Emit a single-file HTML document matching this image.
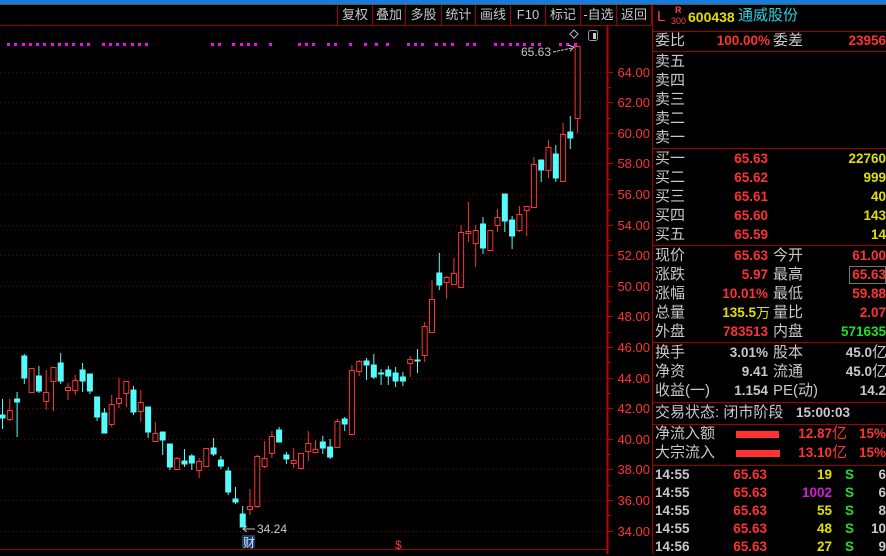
<!DOCTYPE html>
<html><head><meta charset="utf-8"><style>
*{margin:0;padding:0;box-sizing:border-box}
body{width:886px;height:554px;background:#000;overflow:hidden;position:relative;font-family:"Liberation Sans","Noto Sans CJK SC",sans-serif;}
.a{position:absolute;white-space:nowrap;line-height:18px;}
.l{color:#c8c8c8;font-size:15px;}
.n{font-weight:bold;font-size:13.5px;text-align:right;}
.r{color:#ff3232}.y{color:#e0e000}.g{color:#20e020}.w{color:#c8c8c8}.m{color:#d020d0}
.hl{position:absolute;left:652px;width:234px;height:1px;background:#a00000}
.tb{position:absolute;top:5px;height:20px;color:#c8c8c8;font-size:13px;line-height:20px;text-align:center;border-right:1px solid #a00000}
</style></head><body>
<div style="position:absolute;left:0;top:0;width:886px;height:4px;background:#1a7ad8"></div>
<div style="position:absolute;left:0;top:4px;width:886px;height:1px;background:#555"></div>
<div style="position:absolute;left:0;top:25px;width:652px;height:1px;background:#a00000"></div>
<div style="position:absolute;left:337px;top:5px;width:1px;height:20px;background:#a00000"></div>
<div class="tb" style="left:338px;width:35px">复权</div>
<div class="tb" style="left:373px;width:33px">叠加</div>
<div class="tb" style="left:406px;width:36px">多股</div>
<div class="tb" style="left:442px;width:34px">统计</div>
<div class="tb" style="left:476px;width:35px">画线</div>
<div class="tb" style="left:511px;width:35px">F10</div>
<div class="tb" style="left:546px;width:35px">标记</div>
<div class="tb" style="left:581px;width:36px">-自选</div>
<div class="tb" style="left:617px;width:35px">返回</div>
<div style="position:absolute;left:652px;top:5px;width:1px;height:549px;background:#a00000"></div>

<svg style="position:absolute;left:0;top:0" width="652" height="554">
<g stroke="#800000" stroke-dasharray="1,3" stroke-width="1">
<line x1="0" x2="605" y1="72.5" y2="72.5"/><line x1="0" x2="605" y1="102.5" y2="102.5"/><line x1="0" x2="605" y1="133.5" y2="133.5"/><line x1="0" x2="605" y1="163.5" y2="163.5"/><line x1="0" x2="605" y1="194.5" y2="194.5"/><line x1="0" x2="605" y1="225.5" y2="225.5"/><line x1="0" x2="605" y1="255.5" y2="255.5"/><line x1="0" x2="605" y1="286.5" y2="286.5"/><line x1="0" x2="605" y1="316.5" y2="316.5"/><line x1="0" x2="605" y1="347.5" y2="347.5"/><line x1="0" x2="605" y1="378.5" y2="378.5"/><line x1="0" x2="605" y1="408.5" y2="408.5"/><line x1="0" x2="605" y1="439.5" y2="439.5"/><line x1="0" x2="605" y1="469.5" y2="469.5"/><line x1="0" x2="605" y1="500.5" y2="500.5"/><line x1="0" x2="605" y1="531.5" y2="531.5"/>
</g>
<line x1="0" x2="607" y1="549.5" y2="549.5" stroke="#a00000"/>
<line x1="607.5" x2="607.5" y1="26" y2="554" stroke="#c00000" stroke-width="2"/>
<g stroke="#c00000">
<line x1="607" x2="613" y1="72.5" y2="72.5"/><line x1="607" x2="611" y1="87.5" y2="87.5"/><line x1="607" x2="613" y1="102.5" y2="102.5"/><line x1="607" x2="611" y1="118.5" y2="118.5"/><line x1="607" x2="613" y1="133.5" y2="133.5"/><line x1="607" x2="611" y1="148.5" y2="148.5"/><line x1="607" x2="613" y1="163.5" y2="163.5"/><line x1="607" x2="611" y1="179.5" y2="179.5"/><line x1="607" x2="613" y1="194.5" y2="194.5"/><line x1="607" x2="611" y1="210.5" y2="210.5"/><line x1="607" x2="613" y1="225.5" y2="225.5"/><line x1="607" x2="611" y1="240.5" y2="240.5"/><line x1="607" x2="613" y1="255.5" y2="255.5"/><line x1="607" x2="611" y1="271.5" y2="271.5"/><line x1="607" x2="613" y1="286.5" y2="286.5"/><line x1="607" x2="611" y1="301.5" y2="301.5"/><line x1="607" x2="613" y1="316.5" y2="316.5"/><line x1="607" x2="611" y1="332.5" y2="332.5"/><line x1="607" x2="613" y1="347.5" y2="347.5"/><line x1="607" x2="611" y1="362.5" y2="362.5"/><line x1="607" x2="613" y1="378.5" y2="378.5"/><line x1="607" x2="611" y1="393.5" y2="393.5"/><line x1="607" x2="613" y1="408.5" y2="408.5"/><line x1="607" x2="611" y1="424.5" y2="424.5"/><line x1="607" x2="613" y1="439.5" y2="439.5"/><line x1="607" x2="611" y1="454.5" y2="454.5"/><line x1="607" x2="613" y1="469.5" y2="469.5"/><line x1="607" x2="611" y1="485.5" y2="485.5"/><line x1="607" x2="613" y1="500.5" y2="500.5"/><line x1="607" x2="611" y1="515.5" y2="515.5"/><line x1="607" x2="613" y1="531.5" y2="531.5"/>
</g>
<g fill="#ff3232" font-family="Liberation Sans, sans-serif" font-size="13" text-anchor="end">
<text x="650" y="77">64.00</text><text x="650" y="107">62.00</text><text x="650" y="138">60.00</text><text x="650" y="168">58.00</text><text x="650" y="199">56.00</text><text x="650" y="230">54.00</text><text x="650" y="260">52.00</text><text x="650" y="291">50.00</text><text x="650" y="321">48.00</text><text x="650" y="352">46.00</text><text x="650" y="383">44.00</text><text x="650" y="413">42.00</text><text x="650" y="444">40.00</text><text x="650" y="474">38.00</text><text x="650" y="505">36.00</text><text x="650" y="536">34.00</text>
</g>
<g fill="#ff00ff">
<rect x="7" y="43" width="3" height="3"/><rect x="14" y="43" width="3" height="3"/><rect x="22" y="43" width="3" height="3"/><rect x="29" y="43" width="3" height="3"/><rect x="36" y="43" width="3" height="3"/><rect x="43" y="43" width="3" height="3"/><rect x="51" y="43" width="3" height="3"/><rect x="58" y="43" width="3" height="3"/><rect x="65" y="43" width="3" height="3"/><rect x="72" y="43" width="3" height="3"/><rect x="80" y="43" width="3" height="3"/><rect x="87" y="43" width="3" height="3"/><rect x="102" y="43" width="3" height="3"/><rect x="109" y="43" width="3" height="3"/><rect x="116" y="43" width="3" height="3"/><rect x="123" y="43" width="3" height="3"/><rect x="131" y="43" width="3" height="3"/><rect x="138" y="43" width="3" height="3"/><rect x="145" y="43" width="3" height="3"/><rect x="211" y="43" width="3" height="3"/><rect x="218" y="43" width="3" height="3"/><rect x="232" y="43" width="3" height="3"/><rect x="240" y="43" width="3" height="3"/><rect x="247" y="43" width="3" height="3"/><rect x="254" y="43" width="3" height="3"/><rect x="269" y="43" width="3" height="3"/><rect x="298" y="43" width="3" height="3"/><rect x="305" y="43" width="3" height="3"/><rect x="312" y="43" width="3" height="3"/><rect x="327" y="43" width="3" height="3"/><rect x="334" y="43" width="3" height="3"/><rect x="349" y="43" width="3" height="3"/><rect x="364" y="43" width="3" height="3"/><rect x="375" y="43" width="3" height="3"/><rect x="386" y="43" width="3" height="3"/><rect x="407" y="43" width="3" height="3"/><rect x="414" y="43" width="3" height="3"/><rect x="421" y="43" width="3" height="3"/><rect x="435" y="43" width="3" height="3"/><rect x="443" y="43" width="3" height="3"/><rect x="451" y="43" width="3" height="3"/><rect x="466" y="43" width="3" height="3"/><rect x="473" y="43" width="3" height="3"/><rect x="494" y="43" width="3" height="3"/><rect x="501" y="43" width="3" height="3"/><rect x="509" y="43" width="3" height="3"/><rect x="516" y="43" width="3" height="3"/><rect x="523" y="43" width="3" height="3"/><rect x="531" y="43" width="3" height="3"/><rect x="538" y="43" width="3" height="3"/><rect x="559" y="43" width="3" height="3"/><rect x="566" y="43" width="3" height="3"/><rect x="574" y="43" width="3" height="3"/>
</g>
<path d="M574 30 L578 34 L574 38 L570 34 Z" fill="none" stroke="#bbb"/>
<rect x="588.5" y="30.5" width="9" height="10" rx="2" fill="none" stroke="#999"/><rect x="593" y="33" width="3" height="6" fill="#ccc"/>
<g font-family="Liberation Sans, sans-serif" font-size="12" fill="#c8c8c8">
<text x="521" y="56">65.63</text><text x="257" y="533">34.24</text></g>
<path d="M553 52 L572 48" stroke="#c8c8c8" stroke-dasharray="3,1"/><path d="M568 45 L574 47 L570 51" stroke="#c8c8c8" fill="none"/>
<path d="M243 529 L255 529 M247 526 L243 529 L247 532" stroke="#c8c8c8" fill="none"/>
<rect x="242" y="535" width="13" height="13" fill="#1a3a6a"/><text x="243" y="547" fill="#d0e0ff" font-size="12" font-family="Noto Sans CJK SC, sans-serif">财</text>
<text x="395" y="549" fill="#ff3232" font-size="12" font-family="Liberation Sans, sans-serif">$</text>
<g stroke-width="1">
<g stroke="#54fcfc" fill="#54fcfc">
<line x1="2.5" x2="2.5" y1="399" y2="429"/><rect x="0" y="415" width="5" height="3"/>
<line x1="17.1" x2="17.1" y1="392" y2="437"/><rect x="14.6" y="399" width="5" height="3"/>
<line x1="24.3" x2="24.3" y1="354" y2="384"/><rect x="21.8" y="356" width="5" height="22"/>
<line x1="38.9" x2="38.9" y1="366" y2="393"/><rect x="36.4" y="376" width="5" height="15"/>
<line x1="60.7" x2="60.7" y1="353" y2="384"/><rect x="58.2" y="363" width="5" height="18"/>
<line x1="82.6" x2="82.6" y1="363" y2="392"/><rect x="80.1" y="370" width="5" height="11"/>
<line x1="89.9" x2="89.9" y1="374" y2="394"/><rect x="87.4" y="374" width="5" height="17"/>
<line x1="97.1" x2="97.1" y1="397" y2="421"/><rect x="94.6" y="397" width="5" height="20"/>
<line x1="104.4" x2="104.4" y1="408" y2="433"/><rect x="101.9" y="413" width="5" height="20"/>
<line x1="133.5" x2="133.5" y1="386" y2="415"/><rect x="131" y="390" width="5" height="22"/>
<line x1="148.1" x2="148.1" y1="407" y2="438"/><rect x="145.6" y="407" width="5" height="25"/>
<line x1="162.7" x2="162.7" y1="432" y2="455"/><rect x="160.2" y="432" width="5" height="8"/>
<line x1="169.9" x2="169.9" y1="444" y2="470"/><rect x="167.4" y="444" width="5" height="23"/>
<line x1="184.5" x2="184.5" y1="449" y2="467"/><rect x="182" y="461" width="5" height="3"/>
<line x1="191.8" x2="191.8" y1="454" y2="470"/><rect x="189.3" y="456" width="5" height="7"/>
<line x1="213.6" x2="213.6" y1="438" y2="456"/><rect x="211.1" y="448" width="5" height="6"/>
<line x1="220.9" x2="220.9" y1="456" y2="469"/><rect x="218.4" y="460" width="5" height="6"/>
<line x1="228.2" x2="228.2" y1="467" y2="495"/><rect x="225.7" y="471" width="5" height="21"/>
<line x1="235.5" x2="235.5" y1="487" y2="504"/><rect x="233" y="499" width="5" height="3"/>
<line x1="242.7" x2="242.7" y1="506" y2="527"/><rect x="240.2" y="514" width="5" height="13"/>
<line x1="279.1" x2="279.1" y1="427" y2="442"/><rect x="276.6" y="430" width="5" height="12"/>
<line x1="286.4" x2="286.4" y1="452" y2="464"/><rect x="283.9" y="455" width="5" height="4"/>
<line x1="322.8" x2="322.8" y1="436" y2="454"/><rect x="320.3" y="442" width="5" height="6"/>
<line x1="330.1" x2="330.1" y1="439" y2="459"/><rect x="327.6" y="447" width="5" height="10"/>
<line x1="344.7" x2="344.7" y1="417" y2="431"/><rect x="342.2" y="419" width="5" height="5"/>
<line x1="366.5" x2="366.5" y1="358" y2="380"/><rect x="364" y="361" width="5" height="4"/>
<line x1="373.8" x2="373.8" y1="354" y2="379"/><rect x="371.3" y="365" width="5" height="12"/>
<line x1="381.1" x2="381.1" y1="369" y2="385"/><rect x="378.6" y="373" width="5" height="1"/>
<line x1="388.3" x2="388.3" y1="366" y2="385"/><rect x="385.8" y="370" width="5" height="6"/>
<line x1="395.6" x2="395.6" y1="367" y2="387"/><rect x="393.1" y="373" width="5" height="8"/>
<line x1="402.9" x2="402.9" y1="372" y2="386"/><rect x="400.4" y="377" width="5" height="4"/>
<line x1="417.5" x2="417.5" y1="349" y2="373"/><rect x="415" y="360" width="5" height="1"/>
<line x1="439.3" x2="439.3" y1="253" y2="290"/><rect x="436.8" y="273" width="5" height="12"/>
<line x1="483" x2="483" y1="217" y2="254"/><rect x="480.5" y="224" width="5" height="24"/>
<line x1="504.8" x2="504.8" y1="194" y2="232"/><rect x="502.3" y="194" width="5" height="27"/>
<line x1="512.1" x2="512.1" y1="216" y2="249"/><rect x="509.6" y="220" width="5" height="16"/>
<line x1="541.2" x2="541.2" y1="160" y2="182"/><rect x="538.7" y="160" width="5" height="10"/>
<line x1="555.8" x2="555.8" y1="145" y2="182"/><rect x="553.3" y="154" width="5" height="24"/>
<line x1="570.3" x2="570.3" y1="116" y2="149"/><rect x="567.8" y="132" width="5" height="6"/>
</g>
<g stroke="#ff3232" fill="#000">
<line x1="9.8" x2="9.8" y1="399" y2="421"/><rect x="7.3" y="410.5" width="5" height="9"/>
<line x1="31.6" x2="31.6" y1="368" y2="393"/><rect x="29.1" y="368.5" width="5" height="24"/>
<line x1="46.2" x2="46.2" y1="370" y2="410"/><rect x="43.7" y="392.5" width="5" height="9"/>
<line x1="53.5" x2="53.5" y1="367" y2="411"/><rect x="51" y="367.5" width="5" height="14"/>
<line x1="68" x2="68" y1="383" y2="400"/><rect x="65.5" y="387.5" width="5" height="3"/>
<line x1="75.3" x2="75.3" y1="375" y2="395"/><rect x="72.8" y="380.5" width="5" height="10"/>
<line x1="111.7" x2="111.7" y1="395" y2="427"/><rect x="109.2" y="404.5" width="5" height="20"/>
<line x1="119" x2="119" y1="378" y2="408"/><rect x="116.5" y="398.5" width="5" height="5"/>
<line x1="126.3" x2="126.3" y1="381" y2="407"/><rect x="123.8" y="381.5" width="5" height="12"/>
<line x1="140.8" x2="140.8" y1="390" y2="422"/><rect x="138.3" y="402.5" width="5" height="9"/>
<line x1="155.4" x2="155.4" y1="422" y2="441"/><rect x="152.9" y="433.5" width="5" height="8"/>
<line x1="177.2" x2="177.2" y1="457" y2="470"/><rect x="174.7" y="458.5" width="5" height="11"/>
<line x1="199.1" x2="199.1" y1="458" y2="478"/><rect x="196.6" y="461.5" width="5" height="9"/>
<line x1="206.3" x2="206.3" y1="448" y2="467"/><rect x="203.8" y="448.5" width="5" height="18"/>
<line x1="250" x2="250" y1="489" y2="515"/><rect x="247.5" y="506.5" width="5" height="3"/>
<line x1="257.3" x2="257.3" y1="455" y2="508"/><rect x="254.8" y="456.5" width="5" height="50"/>
<line x1="264.6" x2="264.6" y1="441" y2="468"/><rect x="262.1" y="458.5" width="5" height="8"/>
<line x1="271.9" x2="271.9" y1="431" y2="458"/><rect x="269.4" y="436.5" width="5" height="17"/>
<line x1="293.7" x2="293.7" y1="448" y2="468"/><rect x="291.2" y="460.5" width="5" height="3"/>
<line x1="301" x2="301" y1="453" y2="468"/><rect x="298.5" y="453.5" width="5" height="15"/>
<line x1="308.3" x2="308.3" y1="431" y2="461"/><rect x="305.8" y="443.5" width="5" height="8"/>
<line x1="315.5" x2="315.5" y1="440" y2="453"/><rect x="313" y="449.5" width="5" height="3"/>
<line x1="337.4" x2="337.4" y1="419" y2="447"/><rect x="334.9" y="421.5" width="5" height="26"/>
<line x1="351.9" x2="351.9" y1="365" y2="435"/><rect x="349.4" y="370.5" width="5" height="64"/>
<line x1="359.2" x2="359.2" y1="360" y2="376"/><rect x="356.7" y="361.5" width="5" height="10"/>
<line x1="410.2" x2="410.2" y1="356" y2="377"/><rect x="407.7" y="359.5" width="5" height="4"/>
<line x1="424.7" x2="424.7" y1="322" y2="362"/><rect x="422.2" y="326.5" width="5" height="29"/>
<line x1="432" x2="432" y1="280" y2="333"/><rect x="429.5" y="299.5" width="5" height="33"/>
<line x1="446.6" x2="446.6" y1="276" y2="299"/><rect x="444.1" y="277.5" width="5" height="5"/>
<line x1="453.9" x2="453.9" y1="258" y2="284"/><rect x="451.4" y="273.5" width="5" height="11"/>
<line x1="461.1" x2="461.1" y1="225" y2="287"/><rect x="458.6" y="232.5" width="5" height="55"/>
<line x1="468.4" x2="468.4" y1="202" y2="242"/><rect x="465.9" y="231.5" width="5" height="2"/>
<line x1="475.7" x2="475.7" y1="225" y2="267"/><rect x="473.2" y="230.5" width="5" height="13"/>
<line x1="490.3" x2="490.3" y1="230" y2="250"/><rect x="487.8" y="230.5" width="5" height="20"/>
<line x1="497.5" x2="497.5" y1="209" y2="232"/><rect x="495" y="217.5" width="5" height="8"/>
<line x1="519.4" x2="519.4" y1="206" y2="232"/><rect x="516.9" y="214.5" width="5" height="16"/>
<line x1="526.7" x2="526.7" y1="206" y2="236"/><rect x="524.2" y="206.5" width="5" height="4"/>
<line x1="533.9" x2="533.9" y1="157" y2="207"/><rect x="531.4" y="164.5" width="5" height="43"/>
<line x1="548.5" x2="548.5" y1="140" y2="178"/><rect x="546" y="147.5" width="5" height="23"/>
<line x1="563.1" x2="563.1" y1="123" y2="181"/><rect x="560.6" y="134.5" width="5" height="47"/>
<line x1="577.6" x2="577.6" y1="46" y2="133"/><rect x="575.1" y="46.5" width="5" height="72"/>
</g></g>
</svg>

<!-- right panel -->
<div class="a" style="left:657px;top:8px;color:#ff4040;font-size:15px">L</div>
<div class="a" style="left:675px;top:6px;color:#ff4040;font-size:9px;font-weight:bold;line-height:9px">R</div>
<div class="a" style="left:671px;top:16px;color:#ff4040;font-size:9px;line-height:10px">300</div>
<div class="a y" style="left:688px;top:8px;font-size:14px;font-weight:bold">600438</div>
<div class="a" style="left:738px;top:7px;color:#30d0e0;font-size:15px">通威股份</div>
<div class="hl" style="top:31px"></div>
<div class="a l" style="left:655px;top:32px">委比</div>
<div class="a n r" style="left:700px;top:32px;width:70px">100.00%</div>
<div class="a l" style="left:773px;top:32px">委差</div>
<div class="a n r" style="left:820px;top:32px;width:66px">23956</div>
<div class="hl" style="top:51px"></div>
<div class="a l" style="left:655px;top:53px">卖五</div>
<div class="a l" style="left:655px;top:72px">卖四</div>
<div class="a l" style="left:655px;top:91px">卖三</div>
<div class="a l" style="left:655px;top:110px">卖二</div>
<div class="a l" style="left:655px;top:129px">卖一</div>
<div class="hl" style="top:148px"></div>
<div class="a l" style="left:655px;top:150px">买一</div><div class="a n r" style="left:700px;top:150px;width:68px">65.63</div><div class="a n y" style="left:820px;top:150px;width:66px">22760</div>
<div class="a l" style="left:655px;top:169px">买二</div><div class="a n r" style="left:700px;top:169px;width:68px">65.62</div><div class="a n y" style="left:820px;top:169px;width:66px">999</div>
<div class="a l" style="left:655px;top:188px">买三</div><div class="a n r" style="left:700px;top:188px;width:68px">65.61</div><div class="a n y" style="left:820px;top:188px;width:66px">40</div>
<div class="a l" style="left:655px;top:207px">买四</div><div class="a n r" style="left:700px;top:207px;width:68px">65.60</div><div class="a n y" style="left:820px;top:207px;width:66px">143</div>
<div class="a l" style="left:655px;top:226px">买五</div><div class="a n r" style="left:700px;top:226px;width:68px">65.59</div><div class="a n y" style="left:820px;top:226px;width:66px">14</div>
<div class="hl" style="top:245px"></div>
<div class="a l" style="left:655px;top:247px">现价</div><div class="a n r" style="left:700px;top:247px;width:68px">65.63</div><div class="a l" style="left:773px;top:247px">今开</div><div class="a n r" style="left:820px;top:247px;width:66px">61.00</div>
<div class="a l" style="left:655px;top:266px">涨跌</div><div class="a n r" style="left:700px;top:266px;width:68px">5.97</div><div class="a l" style="left:773px;top:266px">最高</div>
<div style="position:absolute;left:849px;top:266px;width:37px;height:18px;border:1px solid #777"></div><div class="a n r" style="left:820px;top:266px;width:66px">65.63</div>
<div class="a l" style="left:655px;top:285px">涨幅</div><div class="a n r" style="left:700px;top:285px;width:68px">10.01%</div><div class="a l" style="left:773px;top:285px">最低</div><div class="a n r" style="left:820px;top:285px;width:66px">59.88</div>
<div class="a l" style="left:655px;top:304px">总量</div><div class="a n y" style="left:700px;top:304px;width:56px">135.5</div><div class="a y" style="left:756px;top:304px;font-size:14px">万</div><div class="a l" style="left:773px;top:304px">量比</div><div class="a n r" style="left:820px;top:304px;width:66px">2.07</div>
<div class="a l" style="left:655px;top:323px">外盘</div><div class="a n r" style="left:700px;top:323px;width:68px">783513</div><div class="a l" style="left:773px;top:323px">内盘</div><div class="a n g" style="left:820px;top:323px;width:66px">571635</div>
<div class="hl" style="top:342px"></div>
<div class="a l" style="left:655px;top:344px">换手</div><div class="a n w" style="left:700px;top:344px;width:68px">3.01%</div><div class="a l" style="left:773px;top:344px">股本</div><div class="a n w" style="left:820px;top:344px;width:52px">45.0</div><div class="a l" style="left:872px;top:344px">亿</div>
<div class="a l" style="left:655px;top:363px">净资</div><div class="a n w" style="left:700px;top:363px;width:68px">9.41</div><div class="a l" style="left:773px;top:363px">流通</div><div class="a n w" style="left:820px;top:363px;width:52px">45.0</div><div class="a l" style="left:872px;top:363px">亿</div>
<div class="a l" style="left:655px;top:382px">收益(一)</div><div class="a n w" style="left:700px;top:382px;width:68px">1.154</div><div class="a l" style="left:773px;top:382px">PE(动)</div><div class="a n w" style="left:820px;top:382px;width:66px">14.2</div>
<div class="hl" style="top:402px"></div>
<div class="a l" style="left:655px;top:404px">交易状态: 闭市阶段</div><div class="a n w" style="left:796px;top:404px;text-align:left">15:00:03</div>
<div class="hl" style="top:424px"></div>
<div class="a l" style="left:655px;top:425px">净流入额</div><div style="position:absolute;left:736px;top:431px;width:43px;height:7px;background:#ff3232"></div><div class="a n r" style="left:790px;top:425px;width:42px">12.87</div><div class="a r" style="left:832px;top:425px;font-size:15px">亿</div><div class="a n r" style="left:850px;top:425px;width:36px">15%</div>
<div class="a l" style="left:655px;top:444px">大宗流入</div><div style="position:absolute;left:736px;top:450px;width:44px;height:7px;background:#ff3232"></div><div class="a n r" style="left:790px;top:444px;width:42px">13.10</div><div class="a r" style="left:832px;top:444px;font-size:15px">亿</div><div class="a n r" style="left:850px;top:444px;width:36px">15%</div>
<div class="hl" style="top:465px"></div>
<div class="a n w" style="left:655px;top:466px;text-align:left">14:55</div><div class="a n r" style="left:700px;top:466px;width:67px">65.63</div><div class="a n y" style="left:790px;top:466px;width:42px">19</div><div class="a n g" style="left:845px;top:466px;text-align:left">S</div><div class="a n w" style="left:860px;top:466px;width:26px">6</div>
<div class="a n w" style="left:655px;top:484px;text-align:left">14:55</div><div class="a n r" style="left:700px;top:484px;width:67px">65.63</div><div class="a n m" style="left:790px;top:484px;width:42px">1002</div><div class="a n g" style="left:845px;top:484px;text-align:left">S</div><div class="a n w" style="left:860px;top:484px;width:26px">6</div>
<div class="a n w" style="left:655px;top:502px;text-align:left">14:55</div><div class="a n r" style="left:700px;top:502px;width:67px">65.63</div><div class="a n y" style="left:790px;top:502px;width:42px">55</div><div class="a n g" style="left:845px;top:502px;text-align:left">S</div><div class="a n w" style="left:860px;top:502px;width:26px">8</div>
<div class="a n w" style="left:655px;top:520px;text-align:left">14:55</div><div class="a n r" style="left:700px;top:520px;width:67px">65.63</div><div class="a n y" style="left:790px;top:520px;width:42px">48</div><div class="a n g" style="left:845px;top:520px;text-align:left">S</div><div class="a n w" style="left:860px;top:520px;width:26px">10</div>
<div class="a n w" style="left:655px;top:538px;text-align:left">14:56</div><div class="a n r" style="left:700px;top:538px;width:67px">65.63</div><div class="a n y" style="left:790px;top:538px;width:42px">27</div><div class="a n g" style="left:845px;top:538px;text-align:left">S</div><div class="a n w" style="left:860px;top:538px;width:26px">9</div>
</body></html>
